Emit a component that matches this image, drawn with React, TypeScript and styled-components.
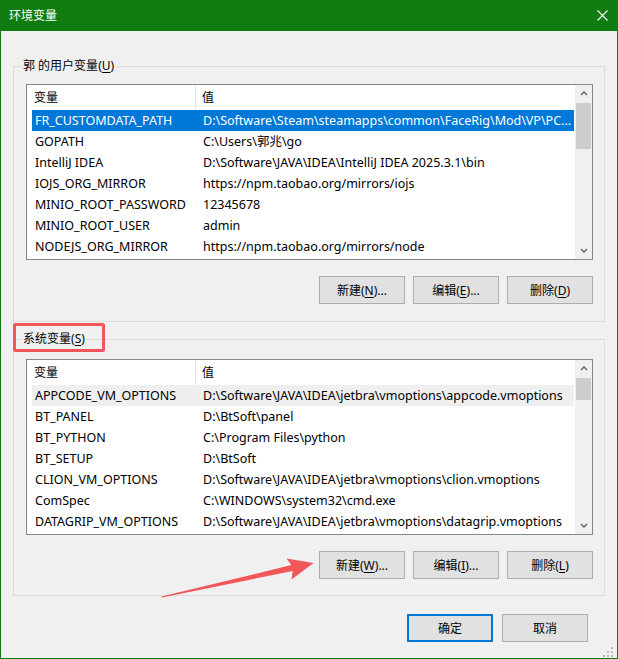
import React from "react";
import styled, { createGlobalStyle, css } from "styled-components";

const UI_FONT = `"Noto Sans", "Noto Sans CJK SC", sans-serif`;

const GlobalStyle = createGlobalStyle`
  html, body {
    margin: 0;
    padding: 0;
    background: #f0f0f0;
  }
  body {
    font-family: ${UI_FONT};
    font-size: 12px;
  }
`;

const Window = styled.div`
  position: relative;
  width: 618px;
  height: 659px;
  display: flex;
  flex-direction: column;
  box-sizing: border-box;
  background: #f0f0f0;
  font-family: ${UI_FONT};
  font-size: 12px;
  color: #000;
`;

const TitleBar = styled.div`
  flex: none;
  height: 31px;
  box-sizing: border-box;
  padding: 0 10px 0 9px;
  display: flex;
  align-items: center;
  justify-content: space-between;
  background: #107c10;
  color: #fff;
`;

const TitleText = styled.span`
  font-size: 12px;
  line-height: 16px;
`;

const Body = styled.div`
  flex: 1;
  min-height: 0;
  border: 1px solid #107c10;
  border-top: none;
  padding: 35px 12px 0 12px;
  display: flex;
  flex-direction: column;
`;

const Group = styled.section<{ $top: number; $gap: number; $bottom: number; $spaced?: boolean }>`
  position: relative;
  border: 1px solid #dcdcdc;
  padding: ${(p) => p.$top}px 11px ${(p) => p.$bottom}px 12px;
  display: flex;
  flex-direction: column;
  gap: ${(p) => p.$gap}px;
  ${(p) =>
    p.$spaced &&
    css`
      margin-top: 17px;
    `}
`;

const Legend = styled.div`
  position: absolute;
  left: 8px;
  top: -10px;
  padding: 0 1px;
  line-height: 17px;
  background: #f0f0f0;
  white-space: nowrap;
`;

const AccessKey = styled.span`
  text-decoration: underline;
  text-underline-offset: 2px;
`;

const ListBox = styled.div`
  height: 176px;
  box-sizing: border-box;
  border: 1px solid #828790;
  background: #fff;
  display: flex;
`;

const ListMain = styled.div`
  flex: 1;
  min-width: 0;
  display: flex;
  flex-direction: column;
`;

const HeaderRow = styled.div`
  height: 25px;
  flex: none;
  display: flex;
  align-items: stretch;
`;

const HeaderCell = styled.div<{ $first?: boolean }>`
  display: flex;
  align-items: center;
  line-height: 16px;
  ${(p) =>
    p.$first
      ? css`
          width: 169px;
          padding-left: 7px;
          box-sizing: border-box;
          border-right: 1px solid #e5e5e5;
        `
      : css`
          flex: 1;
          padding-left: 6px;
        `}
`;

const Rows = styled.div`
  padding: 0 1px 0 5px;
  display: flex;
  flex-direction: column;
`;

type RowState = "selected" | "hover" | "normal";

const Row = styled.div<{ $state: RowState }>`
  height: 21px;
  display: flex;
  align-items: center;
  font-size: 12.5px;
  line-height: 16px;
  white-space: nowrap;
  ${(p) =>
    p.$state === "selected" &&
    css`
      background: #0078d7;
      color: #fff;
    `}
  ${(p) =>
    p.$state === "hover" &&
    css`
      background: #efefef;
    `}
`;

const NameCell = styled.div`
  width: 165px;
  flex: none;
  box-sizing: border-box;
  padding-left: 3px;
  overflow: hidden;
`;

const ValueCell = styled.div`
  flex: 1;
  min-width: 0;
  padding-left: 6px;
  overflow: hidden;
`;

const ScrollBar = styled.div`
  width: 17px;
  flex: none;
  background: #f0f0f0;
  display: flex;
  flex-direction: column;
`;

const ScrollArrow = styled.div`
  height: 17px;
  flex: none;
  display: flex;
  align-items: center;
  justify-content: center;
`;

const ScrollTrack = styled.div`
  flex: 1;
  padding: 1px 1px 0;
`;

const Thumb = styled.div`
  background: #cdcdcd;
`;

const ButtonRow = styled.div<{ $end?: number }>`
  display: flex;
  justify-content: flex-end;
  gap: 8px;
  padding-right: ${(p) => p.$end ?? 0}px;
`;

const Footer = styled(ButtonRow)`
  margin-top: 18px;
  gap: 9px;
`;

const Button = styled.button<{ $default?: boolean }>`
  width: 86px;
  height: 28px;
  box-sizing: border-box;
  padding: 0;
  margin: 0;
  background: #e1e1e1;
  border: 1px solid #adadad;
  font-family: ${UI_FONT};
  font-size: 12px;
  color: #000;
  ${(p) =>
    p.$default &&
    css`
      border: 2px solid #0078d7;
    `}
`;

/* screenshot annotations drawn over the dialog */
const MarkBox = styled.div`
  position: absolute;
  left: -1px;
  top: -17px;
  width: 92px;
  height: 29px;
  box-sizing: border-box;
  border: 3px solid #f0565a;
  border-radius: 2px;
  pointer-events: none;
`;

const ArrowMark = styled.svg`
  position: absolute;
  left: 155px;
  top: 553px;
  pointer-events: none;
`;

const Grip = styled.svg`
  position: absolute;
  right: 5px;
  bottom: 2px;
`;

type Variable = { name: string; value: string; state?: RowState };

const userVars: Variable[] = [
  {
    name: "FR_CUSTOMDATA_PATH",
    value: String.raw`D:\Software\Steam\steamapps\common\FaceRig\Mod\VP\PC...`,
    state: "selected",
  },
  { name: "GOPATH", value: String.raw`C:\Users\郭兆\go` },
  { name: "IntelliJ IDEA", value: String.raw`D:\Software\JAVA\IDEA\IntelliJ IDEA 2025.3.1\bin` },
  { name: "IOJS_ORG_MIRROR", value: "https://npm.taobao.org/mirrors/iojs" },
  { name: "MINIO_ROOT_PASSWORD", value: "12345678" },
  { name: "MINIO_ROOT_USER", value: "admin" },
  { name: "NODEJS_ORG_MIRROR", value: "https://npm.taobao.org/mirrors/node" },
];

const systemVars: Variable[] = [
  {
    name: "APPCODE_VM_OPTIONS",
    value: String.raw`D:\Software\JAVA\IDEA\jetbra\vmoptions\appcode.vmoptions`,
    state: "hover",
  },
  { name: "BT_PANEL", value: String.raw`D:\BtSoft\panel` },
  { name: "BT_PYTHON", value: String.raw`C:\Program Files\python` },
  { name: "BT_SETUP", value: String.raw`D:\BtSoft` },
  { name: "CLION_VM_OPTIONS", value: String.raw`D:\Software\JAVA\IDEA\jetbra\vmoptions\clion.vmoptions` },
  { name: "ComSpec", value: String.raw`C:\WINDOWS\system32\cmd.exe` },
  { name: "DATAGRIP_VM_OPTIONS", value: String.raw`D:\Software\JAVA\IDEA\jetbra\vmoptions\datagrip.vmoptions` },
];

const Chevron = ({ down }: { down?: boolean }) => (
  <svg width="8" height="5" viewBox="0 0 8 5">
    <path
      d={down ? "M1 1 L4 4 L7 1" : "M1 4 L4 1 L7 4"}
      fill="none"
      stroke="#606060"
      strokeWidth="1.4"
    />
  </svg>
);

const CloseIcon = () => (
  <svg width="11" height="11" viewBox="0 0 11 11">
    <path d="M0.5 0.5 L10.5 10.5 M10.5 0.5 L0.5 10.5" stroke="#fff" strokeWidth="1.1" />
  </svg>
);

const VariableList = ({ items, thumb }: { items: Variable[]; thumb: number }) => (
  <ListBox>
    <ListMain>
      <HeaderRow>
        <HeaderCell $first>变量</HeaderCell>
        <HeaderCell>值</HeaderCell>
      </HeaderRow>
      <Rows>
        {items.map((v) => (
          <Row key={v.name} $state={v.state ?? "normal"}>
            <NameCell>{v.name}</NameCell>
            <ValueCell>{v.value}</ValueCell>
          </Row>
        ))}
      </Rows>
    </ListMain>
    <ScrollBar>
      <ScrollArrow>
        <Chevron />
      </ScrollArrow>
      <ScrollTrack>
        <Thumb style={{ height: thumb }} />
      </ScrollTrack>
      <ScrollArrow>
        <Chevron down />
      </ScrollArrow>
    </ScrollBar>
  </ListBox>
);

const Label = ({ text, hotkey, tail = "" }: { text: string; hotkey: string; tail?: string }) => (
  <>
    {text}(<AccessKey>{hotkey}</AccessKey>){tail}
  </>
);

export default function App() {
  return (
    <>
      <GlobalStyle />
      <Window>
        <TitleBar>
          <TitleText>环境变量</TitleText>
          <CloseIcon />
        </TitleBar>
        <Body>
          <Group $top={17} $gap={16} $bottom={17}>
            <Legend>
              <Label text="郭 的用户变量" hotkey="U" />
            </Legend>
            <VariableList items={userVars} thumb={46} />
            <ButtonRow>
              <Button>
                <Label text="新建" hotkey="N" tail="..." />
              </Button>
              <Button>
                <Label text="编辑" hotkey="E" tail="..." />
              </Button>
              <Button>
                <Label text="删除" hotkey="D" />
              </Button>
            </ButtonRow>
          </Group>

          <Group $top={19} $gap={16} $bottom={16} $spaced>
            <Legend>
              <Label text="系统变量" hotkey="S" />
            </Legend>
            <MarkBox />
            <VariableList items={systemVars} thumb={22} />
            <ButtonRow>
              <Button>
                <Label text="新建" hotkey="W" tail="..." />
              </Button>
              <Button>
                <Label text="编辑" hotkey="I" tail="..." />
              </Button>
              <Button>
                <Label text="删除" hotkey="L" />
              </Button>
            </ButtonRow>
          </Group>

          <Footer $end={17}>
            <Button $default>确定</Button>
            <Button>取消</Button>
          </Footer>
        </Body>

        <ArrowMark width="165" height="50" viewBox="0 0 165 50">
          <polygon
            points="6.5,43.6 136.3,12.1 131.5,5.5 158.5,10 136.5,26.5 137.7,17.9 7,44.6"
            fill="#f0565a"
          />
        </ArrowMark>

        <Grip width="10" height="10" viewBox="0 0 10 10">
          <rect x="8" y="0" width="2" height="2" fill="#b9b9b9" />
          <rect x="4" y="4" width="2" height="2" fill="#b9b9b9" />
          <rect x="8" y="4" width="2" height="2" fill="#b9b9b9" />
          <rect x="0" y="8" width="2" height="2" fill="#b9b9b9" />
          <rect x="4" y="8" width="2" height="2" fill="#b9b9b9" />
          <rect x="8" y="8" width="2" height="2" fill="#b9b9b9" />
        </Grip>
      </Window>
    </>
  );
}
